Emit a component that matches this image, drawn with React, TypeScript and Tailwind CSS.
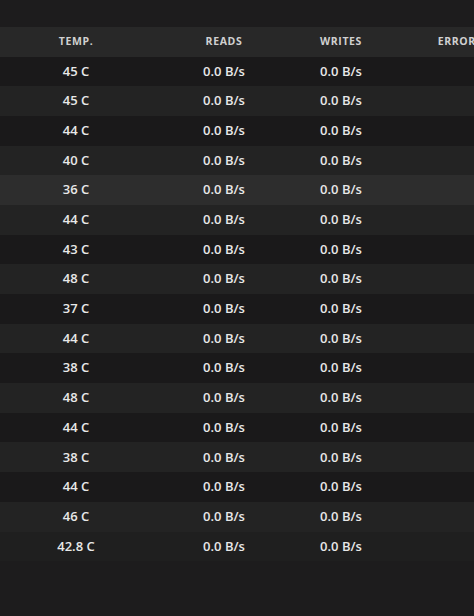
const temps = ["45", "45", "44", "40", "36", "44", "43", "48", "37", "44", "38", "48", "44", "38", "44", "46"];

const cols = ["w-[152px]", "w-[144px]", "w-[90px]", "w-[148px]"];

function Row({ temp, bg }: { temp: string; bg: string }) {
	return (
		<div className={`flex h-[29.7px] items-center text-[13px] font-semibold text-[#e8e8e8] ${bg}`}>
			<div className={`${cols[0]} shrink-0 text-center`}>{temp} C</div>
			<div className={`${cols[1]} shrink-0 text-center`}>0.0 B/s</div>
			<div className={`${cols[2]} shrink-0 text-center`}>0.0 B/s</div>
			<div className={`${cols[3]} shrink-0 text-center`}></div>
		</div>
	);
}

export default function App() {
	return (
		<div
			className="h-[616px] w-[474px] overflow-hidden bg-[#1d1c1d] pt-[27px]"
			style={{ fontFamily: '"Open Sans", "Noto Sans", sans-serif' }}
		>
			<div className="flex h-[29.5px] items-center bg-[#282828] text-[10.5px] font-bold tracking-[0.06em] text-[#d0d0d0]">
				<div className={`${cols[0]} shrink-0 text-center`}>TEMP.</div>
				<div className={`${cols[1]} shrink-0 text-center`}>READS</div>
				<div className={`${cols[2]} shrink-0 text-center`}>WRITES</div>
				<div className={`${cols[3]} shrink-0 text-center`}>ERRORS</div>
			</div>
			{temps.map((t, i) => (
				<Row
					key={i}
					temp={t}
					bg={i === 4 ? "bg-[#2d2d2d]" : i % 2 === 0 ? "bg-[#1a191a]" : "bg-[#232323]"}
				/>
			))}
			<Row temp="42.8" bg="bg-[#1f1f1f]" />
		</div>
	);
}
